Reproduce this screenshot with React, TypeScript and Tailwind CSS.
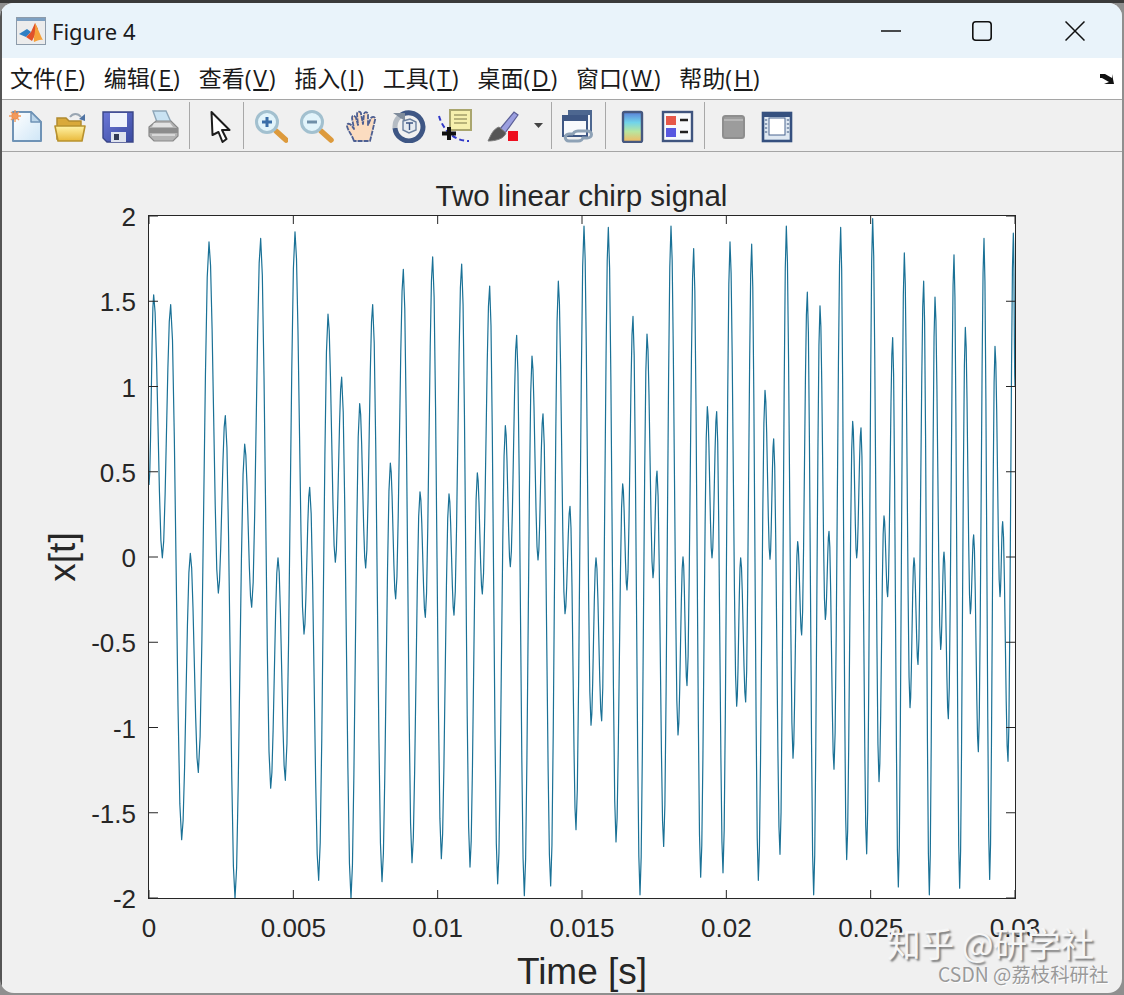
import React from "react";

const panels: [number, number[]][] = [
  [145, [26,188,52,785,77,210,110,1425,136,775,160,1272,192,68,220,865,241,462,270,1558,299,527,320,897,347,60,377,1308,399,785,421,1290,450,45,477,958,494,625,521,1517,549,232,571,795,590,375,618,1558,644,435,662,808]],
  [365, [23,210,51,1520,76,570,92,878,115,130,141,1477,165,635,181,920,203,102,229,1468,252,640,267,915,290,118,315,1487,337,592,352,867,374,168,398,1525,421,485,436,805,455,280,478,1552,501,327,519,790,534,458,557,1530,580,157,600,912,615,668,633,1402,657,32]],
  [585, [18,1165,33,785,50,1155,70,35,93,1430,113,617,126,858,144,237,165,1550,186,277,204,830,216,588,236,1440,258,32,279,1187,294,783,306,1075,326,83,347,1510,367,442,381,785,395,453,414,1500,435,68,455,1122,467,785,482,1112,500,73,520,1517,540,405,555,788,566,515,585,1458,604,32,624,1240,638,748,650,960]],
  [800, [22,182,41,1550,60,213,76,925,87,725,102,1265,122,35,140,1470,158,475,170,785,183,490,200,1457,218,15,237,1293,252,690,263,873,278,285,295,1532,313,93,330,1125,342,785,354,1027,371,157,388,1550,405,193,422,993,432,772,445,1150,462,97,479,1535,496,262,511,912,521,733,535,1225,552,60,569,1515,585,305,600,873,608,703,624,1247,640,48]],
];

function buildPath(): string {
  const pts: [number, number][] = [[149, 485]];
  for (const [origin, d] of panels) {
    for (let i = 0; i < d.length; i += 2) pts.push([origin + d[i] / 3, 212 + d[i + 1] / 2.27]);
  }
  pts.push([1015, 386]);
  let out = `M${pts[0][0]} ${pts[0][1]}`;
  for (let i = 1; i < pts.length; i++) {
    const [x0, y0] = pts[i - 1];
    const [x1, y1] = pts[i];
    for (let s = 1; s <= 6; s++) {
      const f = s / 6;
      const c = (1 - Math.cos(Math.PI * f)) / 2;
      out += `L${(x0 + (x1 - x0) * f).toFixed(2)} ${(y0 + (y1 - y0) * c).toFixed(2)}`;
    }
  }
  return out;
}

const xTicks: [number, string][] = [[149,"0"],[293.33,"0.005"],[437.67,"0.01"],[582,"0.015"],[726.33,"0.02"],[870.67,"0.025"],[1015,"0.03"]];
const yTicks: [number, string][] = [[216,"2"],[301.25,"1.5"],[386.5,"1"],[471.75,"0.5"],[557,"0"],[642.25,"-0.5"],[727.5,"-1"],[812.75,"-1.5"],[898,"-2"]];

function Chart() {
  return (
    <svg viewBox="0 152 1122 841" className="block w-[1122px] h-[841px] font-['Liberation_Sans',sans-serif] fill-[#262626]">
      <rect x="149" y="216" width="866" height="682" className="fill-white" />
      <path d={buildPath()} className="fill-none stroke-[#1a7196]" strokeWidth="1.2" strokeLinejoin="round" />
      <rect x="148.5" y="215.5" width="867" height="683" className="fill-none stroke-[#262626]" strokeWidth="1" />
      {xTicks.map(([x, t]) => (
        <g key={t}>
          <path d={`M${x} 216v8M${x} 898v-8`} className="stroke-[#262626]" strokeWidth="1" />
          <text x={x} y="937" textAnchor="middle" className="text-[26px]">{t}</text>
        </g>
      ))}
      {yTicks.map(([y, t]) => (
        <g key={t}>
          <path d={`M149 ${y}h9M1015 ${y}h-9`} className="stroke-[#262626]" strokeWidth="1" />
          <text x="136" y={y + 10} textAnchor="end" className="text-[26px]">{t}</text>
        </g>
      ))}
      <text x="581.5" y="206" textAnchor="middle" className="text-[29.5px]">Two linear chirp signal</text>
      <text x="582" y="984" textAnchor="middle" className="text-[37px]">Time [s]</text>
      <text transform="translate(75 557) rotate(-90)" textAnchor="middle" className="text-[37px]">x[t]</text>
    </svg>
  );
}

const ic = "w-[34px] h-[34px] shrink-0 blur-[0.5px]";

function Sep({ className }: { className: string }) {
  return <div className={`w-px h-[47px] bg-[#a8a8a8] shrink-0 ${className}`} />;
}

function NewIcon() {
  return (
    <svg viewBox="0 0 34 34" className={`${ic} ml-[8px]`}>
      <defs><linearGradient id="nd" x1="0" y1="0" x2="1" y2="1"><stop offset="0" stopColor="#ffffff" /><stop offset="1" stopColor="#cfe6f7" /></linearGradient></defs>
      <path d="M5 3H23L33 13V32H5Z" fill="url(#nd)" stroke="#6f93b6" strokeWidth="2" strokeLinejoin="round" />
      <path d="M23 3V13H33Z" fill="#bcd6ea" stroke="#6f93b6" strokeWidth="1.5" strokeLinejoin="round" />
      <circle cx="7" cy="7" r="3.6" fill="#f0843c" />
      <path d="M7 1V13M1 7H13M3 3L11 11M11 3L3 11" stroke="#f29a5c" strokeWidth="1.4" />
    </svg>
  );
}
function FolderIcon() {
  return (
    <svg viewBox="0 0 34 34" className={`${ic} ml-[11px]`}>
      <defs><linearGradient id="fo" x1="0" y1="0" x2="0" y2="1"><stop offset="0" stopColor="#fff3a6" /><stop offset="1" stopColor="#e9b93a" /></linearGradient></defs>
      <path d="M4 9H13L16 12H28V30H4Z" fill="#d9a93a" stroke="#b08a30" strokeWidth="1.5" />
      <path d="M2 17H32L29 32H5Z" fill="url(#fo)" stroke="#b8922f" strokeWidth="1.6" strokeLinejoin="round" />
      <path d="M17 8C20 4 25 4 28 8" fill="none" stroke="#9aa6b2" strokeWidth="2" />
      <path d="M26 10L32 5V12Z" fill="#4f73a3" />
    </svg>
  );
}
function SaveIcon() {
  return (
    <svg viewBox="0 0 34 34" className={`${ic} ml-[14px]`}>
      <defs><linearGradient id="sv" x1="0" y1="0" x2="1" y2="1"><stop offset="0" stopColor="#6c78d8" /><stop offset="1" stopColor="#3a4aa0" /></linearGradient></defs>
      <path d="M2 3H32V33H6L2 29Z" fill="url(#sv)" stroke="#3a4688" strokeWidth="1.4" />
      <rect x="9" y="4" width="17" height="14" fill="#eef2fb" />
      <rect x="10" y="23" width="15" height="10" fill="#dfe3ee" />
      <rect x="13" y="25" width="5" height="6" fill="#333b55" />
    </svg>
  );
}
function PrintIcon() {
  return (
    <svg viewBox="0 0 34 34" className={`${ic} ml-[11px]`}>
      <path d="M7 2H20L25 13H11Z" fill="#c9e2f2" stroke="#8ea6b8" strokeWidth="1.4" />
      <path d="M3 18L10 12H25L32 19V27L27 32H8L3 27Z" fill="#b4b4b4" stroke="#8a8a8a" strokeWidth="1.2" />
      <path d="M3 19H32V24H3Z" fill="#8c8c8c" />
      <path d="M8 14H24L27 18H6Z" fill="#e2e2e2" />
      <path d="M6 26H29" stroke="#d8d8d8" strokeWidth="2" />
    </svg>
  );
}
function ArrowIcon() {
  return (
    <svg viewBox="0 0 34 34" className={`${ic} ml-[13px]`}>
      <path d="M8.5 3L26.5 21H19L23.5 30L19.5 33L15.5 23L9.5 26Z" fill="#ffffff" stroke="#1c1c1c" strokeWidth="2" strokeLinejoin="round" />
    </svg>
  );
}
function Glass({ cx, mark }: { cx: number; mark: "plus" | "minus" }) {
  return (
    <>
      <path d={`M${cx + 9} 22L${cx + 19} 31`} stroke="#dd9a3c" strokeWidth="5.5" strokeLinecap="round" />
      <circle cx={cx} cy="13" r="10.5" fill="#e2f4fb" stroke="#a2c0cf" strokeWidth="3" />
      <path d={mark === "plus" ? `M${cx - 5} 13H${cx + 5}M${cx} 8V18` : `M${cx - 5} 13H${cx + 5}`} stroke={mark === "plus" ? "#3a6ea8" : "#6f8fa8"} strokeWidth="3" />
    </>
  );
}
function HandIcon() {
  return (
    <svg viewBox="0 0 34 34" className={`${ic} ml-[11px]`}>
      <path d="M9 32C7 26 3 22 2 17C2 14 5 14 7 17L9 20L7 9C7 6 10 6 11 9L13 16L12 5C12 2 16 2 16 5L18 15L19 5C20 2 23 3 23 6L23 16L26 9C28 7 31 8 30 11L27 24L25 32Z" fill="#fbdcc0" stroke="#4d5f92" strokeWidth="1.8" strokeLinejoin="round" strokeDasharray="5 1" />
    </svg>
  );
}
function RotateIcon() {
  return (
    <svg viewBox="0 0 34 34" className={`${ic} ml-[13px]`}>
      <path d="M7 8A14 14 0 1 1 3 19" fill="none" stroke="#3e5684" strokeWidth="5" />
      <path d="M3 19A14 14 0 0 1 7 8" fill="none" stroke="#b5bcc4" strokeWidth="5" />
      <path d="M1 4H13V12Z" fill="#7f8c9c" />
      <path d="M11 12L18 10L24 13V21L17 24L11 21Z" fill="#e6ebf1" stroke="#6a7f9e" strokeWidth="1.4" />
      <path d="M14 14H21M17.5 14V21" fill="none" stroke="#3e5684" strokeWidth="1.4" />
    </svg>
  );
}
function TipIcon() {
  return (
    <svg viewBox="0 0 34 34" className={`${ic} ml-[12px]`}>
      <path d="M1 7C4 18 14 32 31 32" fill="none" stroke="#3038c8" strokeWidth="2" strokeDasharray="5 3" />
      <rect x="12" y="1" width="21" height="20" fill="#f6f0ad" stroke="#aaa66e" strokeWidth="2" />
      <path d="M16 6H29M16 10H29M16 14H29" stroke="#a49e6a" strokeWidth="1.6" />
      <path d="M11 18V31M4 24.5H18" stroke="#111111" strokeWidth="4" />
    </svg>
  );
}
function BrushIcon() {
  return (
    <svg viewBox="0 0 34 34" className={`${ic} ml-[14px]`}>
      <path d="M14 20L28 3L32 6L19 24Z" fill="#9b9fe0" stroke="#5b5f96" strokeWidth="1.2" />
      <path d="M13 18C7 20 5 26 2 32C9 32 18 30 20 24Z" fill="#565656" stroke="#7c7c7c" />
      <rect x="22" y="22" width="10" height="10" fill="#ee0f1f" />
    </svg>
  );
}
function LinkIcon() {
  return (
    <svg viewBox="0 0 34 34" className={`${ic} ml-[9px]`}>
      <rect x="8" y="2" width="22" height="20" fill="#f4f7fb" stroke="#4d6790" strokeWidth="2" />
      <rect x="8" y="2" width="22" height="4" fill="#4d6790" />
      <rect x="2" y="7" width="24" height="20" fill="#f7f9fc" stroke="#3e5784" strokeWidth="2" />
      <rect x="2" y="7" width="24" height="5" fill="#3e5784" />
      <path d="M12 25H8C3 25 3 32 8 32H17C20 32 22 30 22 28M21 29H26C32 29 32 22 26 22H17C14 22 12 24 12 26" fill="none" stroke="#8ea2b6" strokeWidth="3" />
    </svg>
  );
}
function ColorbarIcon() {
  return (
    <svg viewBox="0 0 34 34" className={`${ic} ml-[9px]`}>
      <defs><linearGradient id="cb" x1="0" y1="0" x2="0" y2="1"><stop offset="0" stopColor="#5a7fd8" /><stop offset="0.35" stopColor="#71d4ea" /><stop offset="0.65" stopColor="#b8e6a0" /><stop offset="1" stopColor="#f4b860" /></linearGradient></defs>
      <rect x="8" y="3" width="19" height="30" rx="1.5" fill="url(#cb)" stroke="#46587f" strokeWidth="2.4" />
    </svg>
  );
}
function LegendIcon() {
  return (
    <svg viewBox="0 0 34 34" className={`${ic} ml-[11px]`}>
      <rect x="3" y="3" width="29" height="29" fill="#f8fafc" stroke="#40557f" strokeWidth="2.4" />
      <rect x="6" y="7" width="10" height="9" fill="#e6584a" />
      <rect x="6" y="19" width="10" height="9" fill="#5858e0" />
      <path d="M20 11H28M20 23H28" stroke="#222222" strokeWidth="2.4" />
    </svg>
  );
}
function GrayIcon() {
  return (
    <svg viewBox="0 0 34 34" className={`${ic} ml-[11px]`}>
      <rect x="7" y="7" width="21" height="22" rx="2.5" fill="#9c9c9c" stroke="#8e8e8e" strokeWidth="2" />
      <path d="M8 11H27" stroke="#b6b6b6" strokeWidth="2" />
    </svg>
  );
}
function SquareIcon() {
  return (
    <svg viewBox="0 0 34 34" className={`${ic} ml-[10px]`}>
      <rect x="3" y="4" width="28" height="28" fill="#dfe8f2" stroke="#35507f" strokeWidth="2.6" />
      <rect x="3" y="4" width="28" height="4" fill="#35507f" />
      <rect x="9" y="9" width="16" height="17" fill="#ffffff" stroke="#4a648f" />
      <path d="M6 10V26M28 10V26" stroke="#8a9cb6" strokeWidth="2.4" strokeDasharray="2 2" />
    </svg>
  );
}

function Logo() {
  return (
    <svg viewBox="0 0 30 28" className="w-[30px] h-[28px] ml-[16px] shrink-0 blur-[0.3px]">
      <rect x="0.5" y="0.5" width="29" height="27" fill="#ececec" stroke="#8d9baa" />
      <rect x="1" y="1" width="28" height="3" fill="#7da0c2" />
      <path d="M3 17L11 12L15 15L10 20Z" fill="#2f7fc4" />
      <path d="M10 20L15 15L19 6L22 12L16 24Z" fill="#e0512a" />
      <path d="M19 6C21 9 25 20 27 23C24 22 21 24 18 25C17 22 20 14 19 6Z" fill="#f5a13a" />
    </svg>
  );
}

const menus: [string, string][] = [["文件","F"],["编辑","E"],["查看","V"],["插入","I"],["工具","T"],["桌面","D"],["窗口","W"],["帮助","H"]];

export default function App() {
  return (
    <div className="w-[1124px] h-[995px] overflow-hidden bg-[#8f8f8f] border-t-[3px] border-t-[#3a3a3a]">
      <div className="relative w-[1122px] h-[990px] rounded-[14px] overflow-hidden bg-[#f0f0f0] flex flex-col font-['Open_Sans','Noto_Sans_CJK_SC',sans-serif] text-[#1a1a1a]">
        <div className="h-[55px] shrink-0 bg-[#e9f3fa] flex items-center">
          <Logo />
          <span className="ml-[6px] text-[22px] leading-none font-['Noto_Sans',sans-serif]">Figure 4</span>
          <div className="ml-auto flex items-center">
            <svg viewBox="0 0 20 20" className="w-[20px] h-[20px] stroke-[#111]" fill="none"><path d="M0 10H20" strokeWidth="1.6" /></svg>
            <svg viewBox="0 0 20 20" className="w-[20px] h-[20px] ml-[71px] stroke-[#111]" fill="none"><rect x="0.8" y="0.8" width="18.4" height="18.4" rx="3" strokeWidth="1.6" /></svg>
            <svg viewBox="0 0 20 20" className="w-[20px] h-[20px] ml-[73px] mr-[37px] stroke-[#111]" fill="none"><path d="M0.5 0.5L19.5 19.5M19.5 0.5L0.5 19.5" strokeWidth="1.5" /></svg>
          </div>
        </div>
        <div className="h-[41px] shrink-0 bg-white flex items-center pl-[10px] gap-[17px] text-[23px] leading-none">
          {menus.map(([c, k]) => (
            <span key={k} className="whitespace-nowrap">{c}<span className="tracking-[1.8px]">(<u>{k}</u>)</span></span>
          ))}
          <svg viewBox="0 0 14 12" className="w-[14px] h-[12px] ml-auto mr-[8px] fill-[#111]"><path d="M0 1H5L12 5V1L14 11H4L9 9L2 5H0Z" /></svg>
        </div>
        <div className="h-[53px] shrink-0 border-y border-y-[#a5a5a5] flex items-center bg-[#f0f0f0]">
          <NewIcon /><FolderIcon /><SaveIcon /><PrintIcon />
          <Sep className="ml-[9px]" />
          <ArrowIcon />
          <Sep className="ml-[6px]" />
          <svg viewBox="0 0 34 34" className={`${ic} ml-[10px]`}><Glass cx={13} mark="plus" /></svg>
          <svg viewBox="0 0 34 34" className={`${ic} ml-[12px]`}><Glass cx={12} mark="minus" /></svg>
          <HandIcon /><RotateIcon /><TipIcon /><BrushIcon />
          <svg viewBox="0 0 9 5" className="w-[9px] h-[5px] ml-[14px] shrink-0 fill-[#444]"><path d="M0 0H9L4.5 5Z" /></svg>
          <Sep className="ml-[8px]" />
          <LinkIcon />
          <Sep className="ml-[10px]" />
          <ColorbarIcon /><LegendIcon />
          <Sep className="ml-[10px]" />
          <GrayIcon /><SquareIcon />
        </div>
        <Chart />
        <div className="absolute left-0 top-0 w-[2px] h-full bg-[#555555]" />
        <div className="absolute left-[887px] top-[923px] text-[33.6px] leading-none whitespace-nowrap text-[#f6f6f6] font-['Noto_Sans_CJK_SC',sans-serif] [text-shadow:2px_2px_2px_#777777]">知乎 @研学社</div>
        <div className="absolute left-[938px] top-[961px] text-[19.4px] leading-none whitespace-nowrap text-[#9a9a9a] font-['Noto_Sans_CJK_SC',sans-serif] [text-shadow:1px_1px_1px_#ffffff]">CSDN @荔枝科研社</div>
      </div>
    </div>
  );
}
